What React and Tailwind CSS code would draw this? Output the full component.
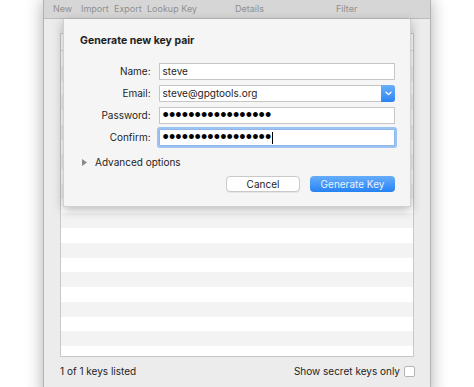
import React from "react";

const dots = "•".repeat(17);

const Field = ({ label, children }) => (
  <div className="flex items-center h-[17px]">
    <span className="w-[72px] text-right pr-[1px]">{label}</span>
    <div className="ml-[7px] w-[238px] h-[17px]">{children}</div>
  </div>
);

const App = () => {
  const rows = Array.from({ length: 22 });

  return (
    <div className="w-[474px] h-[387px] bg-white overflow-hidden pl-[43px] font-['Inter',sans-serif] text-[10px] text-[#1e1e1e]">
      <div className="relative w-[388px] h-[400px] flex flex-col bg-[#ececec] border-x border-[#b3b3b3] shadow-[0_0_16px_rgba(0,0,0,0.32)]">
        {/* toolbar */}
        <div className="h-[19px] shrink-0 bg-[#d6d6d6] border-b border-[#bcbcbc] flex items-center pl-[9px] text-[9px] text-[#8f8f8f]">
          <span className="w-[28px]">New</span>
          <span className="w-[33px]">Import</span>
          <span className="w-[33px]">Export</span>
          <span className="w-[88px]">Lookup Key</span>
          <span className="w-[101px]">Details</span>
          <span>Filter</span>
        </div>

        {/* key list */}
        <div className="px-[16px] pt-[14px]">
          <div className="h-[324px] bg-white border border-[#c8c8c8] overflow-hidden">
            <div className="h-[17px] border-b border-[#dcdcdc]"></div>
            {rows.map((_, i) => (
              <div key={i} className={i % 2 === 1 ? "h-[14.75px] bg-[#f3f3f3]" : "h-[14.75px] bg-white"}></div>
            ))}
          </div>
          <div className="h-[28px] flex items-center justify-between text-[10px]">
            <span>1 of 1 keys listed</span>
            <div className="flex items-center gap-[4px]">
              <span>Show secret keys only</span>
              <div className="w-[11px] h-[11px] bg-white border border-[#b5b5b5] rounded-[2px] mr-[-1px]"></div>
            </div>
          </div>
        </div>

        {/* sheet */}
        <div className="absolute left-[19px] top-[19px] w-[348px] h-[188px] bg-[#f5f5f5] border-x border-b border-[#d0d0d0] shadow-[0_3px_10px_rgba(0,0,0,0.28)] pl-[16px] pr-[15px] pt-[15px] flex flex-col">
          <div className="text-[10.5px] font-bold leading-[14px]">Generate new key pair</div>

          <div className="mt-[15px] flex flex-col gap-[5px]">
            <Field label="Name:">
              <div className="h-full bg-white border border-[#c6c6c6] pl-[3px] flex items-center">steve</div>
            </Field>
            <Field label="Email:">
              <div className="h-full bg-white border border-[#c6c6c6] flex items-center rounded-r-[3px]">
                <span className="flex-1 pl-[3px]">steve@gpgtools.org</span>
                <div className="w-[14px] h-[17px] mr-[-1px] rounded-r-[3px] bg-gradient-to-b from-[#6ab0fb] to-[#2a83f3] flex items-center justify-center">
                  <svg width="7" height="5" viewBox="0 0 7 5">
                    <path d="M1 1.2 L3.5 3.6 L6 1.2" fill="none" stroke="white" strokeWidth="1.3" strokeLinecap="round" strokeLinejoin="round" />
                  </svg>
                </div>
              </div>
            </Field>
            <Field label="Password:">
              <div className="h-full bg-white border border-[#c6c6c6] pl-[3px] flex items-center">
                <span className="font-['Liberation_Sans',sans-serif] text-[18px] leading-[15px] tracking-[0.1px] text-black">{dots}</span>
              </div>
            </Field>
            <Field label="Confirm:">
              <div className="h-full bg-white border border-[#8fb8ec] ring-2 ring-[#9cc3f2] rounded-[1px] pl-[3px] flex items-center">
                <span className="font-['Liberation_Sans',sans-serif] text-[18px] leading-[15px] tracking-[0.1px] text-black">{dots}</span>
                <span className="w-[1px] h-[12px] bg-black ml-[1px]"></span>
              </div>
            </Field>
          </div>

          <div className="mt-[9px] h-[14px] flex items-center">
            <svg width="5" height="7" viewBox="0 0 5 7" className="ml-[2px]">
              <path d="M0 0 L5 3.5 L0 7 Z" fill="#8a8a8a" />
            </svg>
            <span className="ml-[8px]">Advanced options</span>
          </div>

          <div className="mt-[7px] flex justify-end gap-[10px]">
            <button className="w-[74px] h-[16px] bg-white border border-[#c9c9c9] rounded-[4px] shadow-[0_1px_0_rgba(0,0,0,0.06)] text-[10px] leading-none">Cancel</button>
            <button className="w-[85px] h-[16px] rounded-[4px] bg-gradient-to-b from-[#65adfa] to-[#2482f4] text-[#eaf3ff] text-[10px] leading-none">Generate Key</button>
          </div>
        </div>
      </div>
    </div>
  );
};

export default App;
